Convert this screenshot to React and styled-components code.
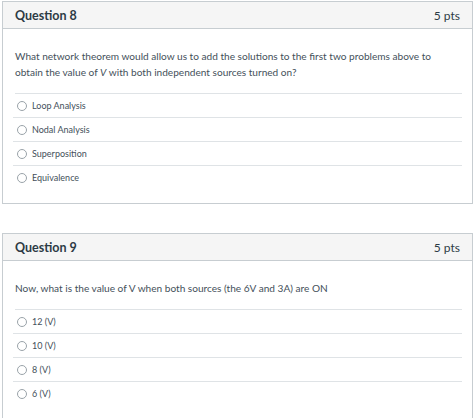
import React from "react";
import styled, { createGlobalStyle } from "styled-components";

const GlobalStyle = createGlobalStyle`
  body {
    margin: 0;
    background: #ffffff;
    font-family: Lato, "Liberation Sans", sans-serif;
    color: #44505a;
  }
`;

const Page = styled.div`
  display: flex;
  flex-direction: column;
  gap: 29px;
  padding: 1px 1px 0 2px;
`;

const Card = styled.section`
  border: 1px solid #c7cdd1;
  background: #fff;
`;

const Header = styled.header`
  display: flex;
  justify-content: space-between;
  align-items: center;
  height: 26px;
  padding: 0 12px;
  background: #f5f5f5;
  border-bottom: 1px solid #c7cdd1;
`;

const Title = styled.h2`
  margin: 0;
  font-size: 12.5px;
  font-weight: 700;
  color: #2d3b45;
`;

const Points = styled.span`
  font-size: 12px;
  color: #2d3b45;
`;

const Body = styled.div`
  padding: 19px 10px 14px 10px;
`;

const Prompt = styled.p`
  margin: 0 0 0 2px;
  padding-bottom: 13px;
  font-size: 10.1px;
  line-height: 16px;
  color: #44505a;
  border-bottom: 1px solid #dfe3e6;

  span {
    display: block;
    max-width: 428px;
  }
`;

const Answer = styled.label`
  display: flex;
  align-items: center;
  gap: 5px;
  height: 23px;
  padding-left: 4px;
  border-bottom: ${(p) => (p.$last ? "none" : "1px solid #dfe3e6")};
  font-size: 9px;
  color: #44505a;
`;

const Radio = styled.span`
  width: 8px;
  height: 8px;
  border: 1px solid #9aa3a9;
  border-radius: 50%;
  background: #fff;
`;

const questions = [
  {
    title: "Question 8",
    prompt: (
      <>
        What network theorem would allow us to add the solutions to the first two problems above to
        obtain the value of <i>V</i>&nbsp;with both independent sources turned on?
      </>
    ),
    answers: ["Loop Analysis", "Nodal Analysis", "Superposition", "Equivalence"],
  },
  {
    title: "Question 9",
    prompt: "Now, what is the value of V when both sources (the 6V and 3A) are ON",
    answers: ["12 (V)", "10 (V)", "8 (V)", "6 (V)"],
  },
];

export default function App() {
  return (
    <>
      <GlobalStyle />
      <Page>
        {questions.map((q) => (
          <Card key={q.title}>
            <Header>
              <Title>{q.title}</Title>
              <Points>5 pts</Points>
            </Header>
            <Body>
              <Prompt>
                <span>{q.prompt}</span>
              </Prompt>
              {q.answers.map((a, i) => (
                <Answer key={a} $last={i === q.answers.length - 1}>
                  <Radio />
                  {a}
                </Answer>
              ))}
            </Body>
          </Card>
        ))}
      </Page>
    </>
  );
}
